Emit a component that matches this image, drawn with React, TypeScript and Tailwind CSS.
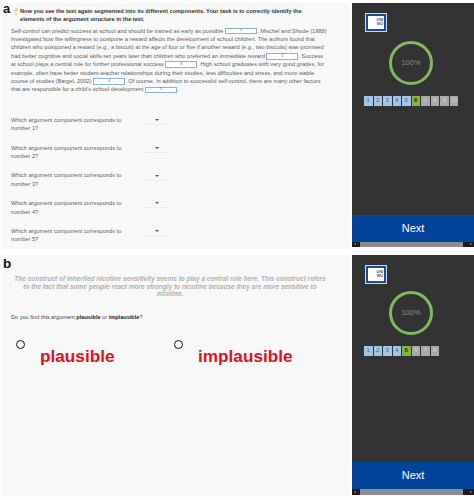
const sans = "font-['Liberation_Sans',Arial,sans-serif]"

function Blank({ n }: { n: number }) {
  return (
    <span className="inline-flex h-[6.5px] w-[32px] items-center justify-center border border-[#8fb0d6] bg-white align-middle text-[3.5px] leading-none text-[#555]">
      {n}
    </span>
  )
}

function Question({ n }: { n: number }) {
  return (
    <div className="flex h-[27.7px] items-start">
      <div className="w-[134px] text-[5.7px] leading-[8.6px] text-[#5e5e5e]">
        <div className="whitespace-nowrap">Which argument component corresponds to</div>
        <div>number {n}?</div>
      </div>
      <div className="flex h-[9.5px] w-[23px] items-center justify-center border-b border-[#f0f0f0]">
        <div className="h-0 w-0 border-x-[2px] border-t-[2.5px] border-x-transparent border-t-[#555]" />
      </div>
    </div>
  )
}

function Logo() {
  return (
    <div className="ml-[13px] flex h-[19px] w-[22px] border border-[#cfd6e4] bg-[#1d4a94] p-[2px]">
      <div className="flex flex-1 flex-col items-end bg-white pr-[1px] pt-[2px]">
        <span className="text-[3.8px] font-bold leading-[4.2px] text-[#39588c]">UNI</span>
        <span className="text-[3.8px] font-bold leading-[4.2px] text-[#39588c]">WÜ</span>
      </div>
    </div>
  )
}

function Sidebar({ total, current, h, logoGap }: { total: number; current: number; h: string; logoGap: string }) {
  const steps = Array.from({ length: total }, (_, i) => i + 1)
  return (
    <div className={`flex ${h} w-[122px] flex-col bg-[#333333]`}>
      <div className="flex flex-1 flex-col pt-[10px]">
        <Logo />
        <div className={`ml-[37px] ${logoGap} flex h-[44px] w-[44px] items-center justify-center rounded-full border-[3.5px] border-[#82b85f]`}>
          <span className="text-[7.5px] text-[#8a8a8a]">100%</span>
        </div>
        <div className="ml-[12px] mt-[11px] flex gap-[1px]">
          {steps.map(s => (
            <div
              key={s}
              className={`flex h-[9.5px] w-[8.5px] items-center justify-center text-[6px] ${
                s < current
                  ? 'bg-[#a4c6e6] text-[#44688c]'
                  : s === current
                    ? 'bg-[#86b53f] font-bold text-[#1e2d10]'
                    : 'bg-[#a9a9a9] text-[#d4d4d4]'
              }`}
            >
              {s}
            </div>
          ))}
        </div>
      </div>
      <div className="flex h-[27px] items-center justify-center bg-[#04439a] text-[11px] text-white">Next</div>
      <div className="flex h-[5.5px] items-center justify-between bg-[#1d1d1d] px-[2px]">
        <div className="h-0 w-0 border-y-[1.5px] border-r-[2px] border-y-transparent border-r-[#999]" />
        <div className="h-full w-[103px] -translate-x-[2px] bg-[#8c8c8c]" />
        <div className="h-0 w-0 border-y-[1.5px] border-l-[2px] border-y-transparent border-l-[#999]" />
      </div>
    </div>
  )
}

export default function App() {
  return (
    <div className={`h-[500px] w-[474px] overflow-hidden bg-white ${sans}`}>
      {/* a */}
      <div className="flex gap-[2px] pl-[2px] pt-[3px]">
        <div className="h-[246px] w-[348px] bg-[#f8f8f8] pl-[9px]">
          <div className="-ml-[8px] flex h-[20px]">
            <span className="w-[10px] text-[13px] font-bold leading-[12px] text-[#111]">a</span>
            <svg viewBox="0 0 6 8" className="mt-[5px] h-[8px] w-[6px]">
              <path d="M3 0 L3 8 M1 3 L3 1 L5 3" fill="none" stroke="#c9c58a" strokeWidth="1" />
            </svg>
            <div className="ml-[1px] mt-[3.5px] text-[5.65px] font-bold leading-[8.4px] text-[#333]">
              <div className="whitespace-nowrap">Now you see the text again segmented into its different components. Your task is to correctly identify the</div>
              <div className="whitespace-nowrap">elements of the argument structure in the text.</div>
            </div>
          </div>
          <div className="mt-[3.5px] text-[5.7px] leading-[8.42px] text-[#5e5e5e]">
            <div className="whitespace-nowrap">Self-control can predict success at school and should be trained as early as possible <Blank n={1} />. Mischel and Shode (1988)</div>
            <div className="whitespace-nowrap">investigated how the willingness to postpone a reward affects the development of school children. The authors found that</div>
            <div className="whitespace-nowrap">children who postponed a reward (e.g., a biscuit) at the age of four or five if another reward (e.g., two biscuits) was promised</div>
            <div className="whitespace-nowrap">had better cognitive and social skills ten years later than children who preferred an immediate reward <Blank n={2} />. Success</div>
            <div className="whitespace-nowrap">at school plays a central role for further professional success <Blank n={3} />. High school graduates with very good grades, for</div>
            <div className="whitespace-nowrap">example, often have better student-teacher relationships during their studies, less difficulties and stress, and more stable</div>
            <div className="whitespace-nowrap">course of studies (Bargel, 2002) <Blank n={4} />. Of course, in addition to successful self-control, there are many other factors</div>
            <div className="whitespace-nowrap">that are responsible for a child's school development <Blank n={5} />.</div>
          </div>
          <div className="mt-[22px] flex flex-col">
            {[1, 2, 3, 4, 5].map(n => (
              <Question key={n} n={n} />
            ))}
          </div>
        </div>
        <Sidebar total={10} current={6} h="h-[244px]" logoGap="mt-[9px]" />
      </div>

      {/* b */}
      <div className="mt-[6px] flex gap-[2px] pl-[2px]">
        <div className="h-[242px] w-[348px] bg-[#f8f8f8]">
          <span className="ml-[1px] mt-[2px] block h-[14px] text-[13.5px] font-bold leading-[14px] text-[#111]">b</span>
          <div className="mt-[4px] pr-[12px] text-center text-[6.5px] font-bold italic leading-[7.6px] text-[#b0b0b0]">
            <div className="whitespace-nowrap">The construct of inherited nicotine sensitivity seems to play a central role here. This construct refers</div>
            <div className="whitespace-nowrap">to the fact that some people react more strongly to nicotine because they are more sensitive to</div>
            <div>nicotine.</div>
          </div>
          <div className="ml-[9px] mt-[15px] text-[5.6px] leading-[8px] text-[#444]">
            Do you find this argument <b className="text-[#222]">plausible</b> or <b className="text-[#222]">implausible</b>?
          </div>
          <div className="ml-[14px] mt-[19px] flex">
            <div className="flex w-[158px]">
              <div className="h-[9px] w-[9px] rounded-full border-[1.5px] border-[#111]" />
              <span className="ml-[15px] mt-[6px] text-[17.2px] font-bold leading-[20px] text-[#e2101c]">plausible</span>
            </div>
            <div className="flex">
              <div className="h-[9px] w-[9px] rounded-full border-[1.5px] border-[#111]" />
              <span className="ml-[15px] mt-[6px] text-[17.2px] font-bold leading-[20px] text-[#e2101c]">implausible</span>
            </div>
          </div>
        </div>
        <Sidebar total={8} current={5} h="h-[239.5px]" logoGap="mt-[7px]" />
      </div>
    </div>
  )
}
